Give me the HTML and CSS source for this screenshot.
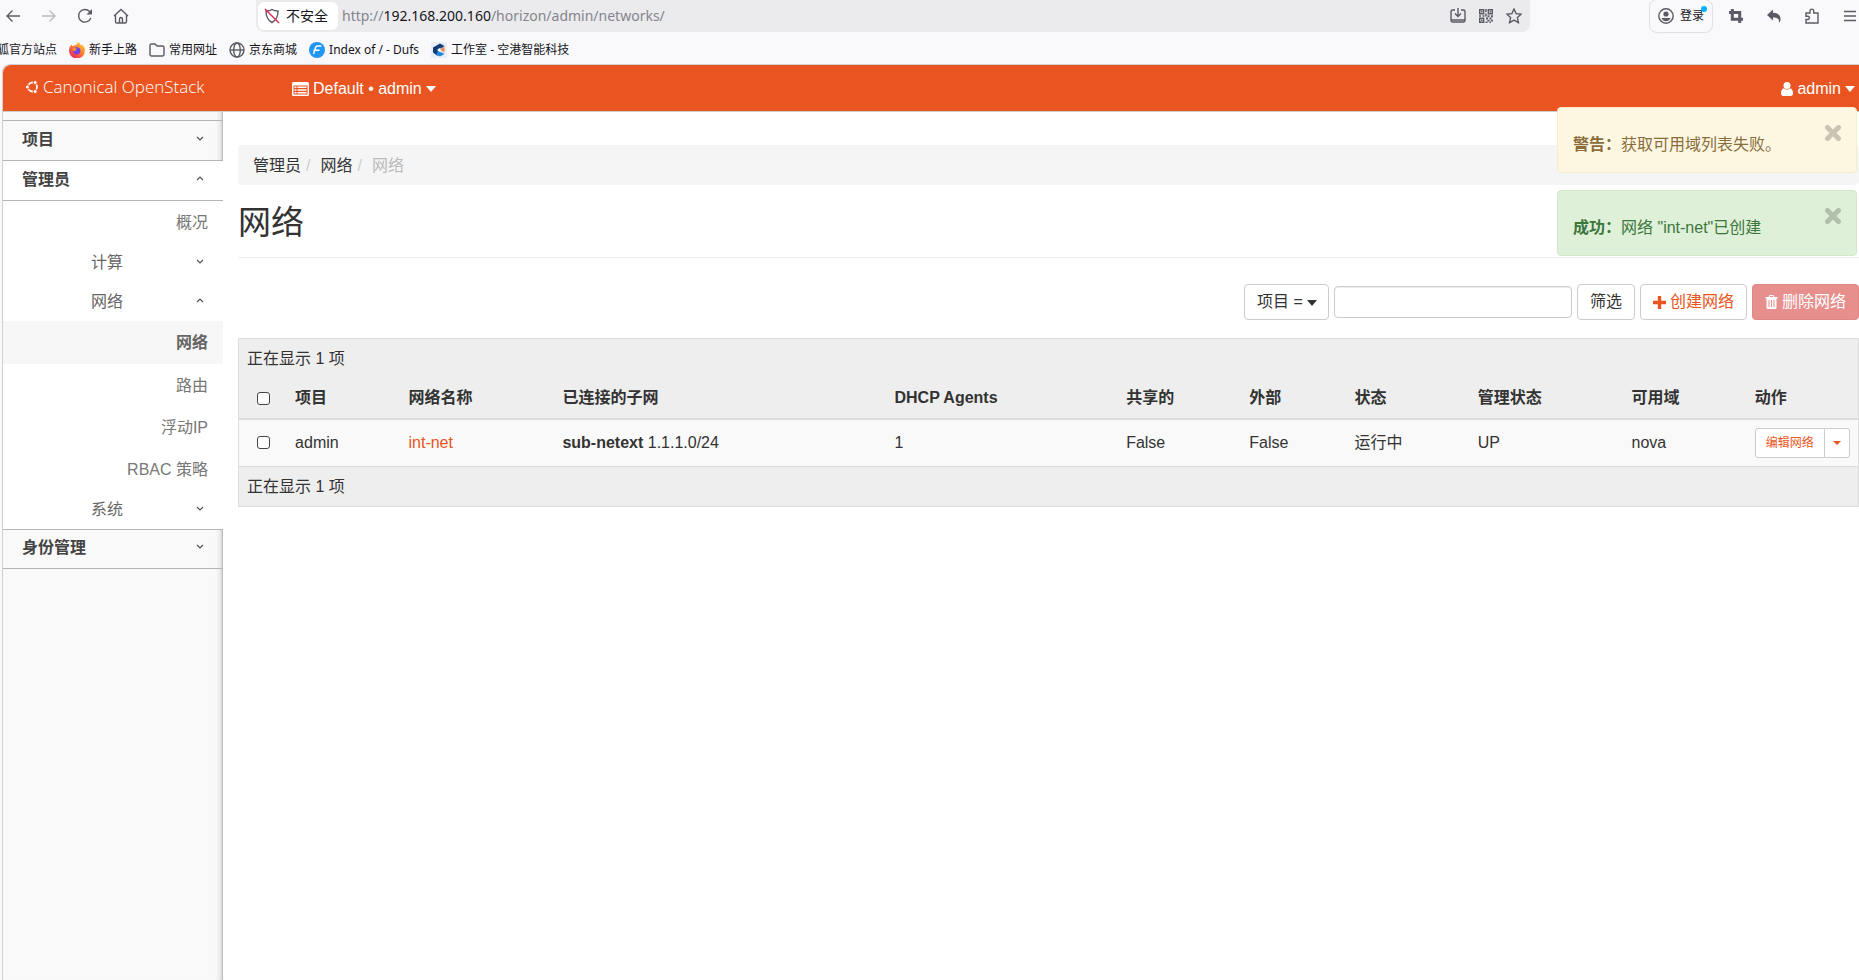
FILE: index.html
```html
<!DOCTYPE html>
<html lang="zh-CN">
<head>
    <meta charset="UTF-8">
    <meta name="viewport" content="width=device-width, initial-scale=1.0">
    <title>网络 - Canonical OpenStack</title>
    <link rel="stylesheet" href="styles.css">
</head>
<body>
    <div class="browser">
        <div class="toolbar">
            <div class="nav-buttons">
                <button type="button" class="icon-btn" aria-label="后退"><svg width="16" height="16" viewBox="0 0 16 16"><path d="M15 8H2M7.500 2.500L2 8l5.500 5.500" /></svg></button>
                <button type="button" class="icon-btn disabled" aria-label="前进"><svg width="16" height="16" viewBox="0 0 16 16"><path d="M1 8h13M8.500 2.500L14 8l-5.500 5.500" /></svg></button>
                <button type="button" class="icon-btn" aria-label="刷新"><svg width="16" height="16" viewBox="0 0 16 16"><path d="M13.800 10A6.300 6.300 0 1 1 12.500 3.500L14 5" /><path class="fill" d="M15 1v5.500H9.500z" /></svg></button>
                <button type="button" class="icon-btn" aria-label="主页"><svg width="16" height="16" viewBox="0 0 16 16"><path d="M1 8l7-6.500L15 8M2.500 7v6.500a1.500 1.500 0 0 0 1.500 1.500h8a1.500 1.500 0 0 0 1.500-1.500V7M6.500 15v-4a1.500 1.500 0 0 1 3 0v4" /></svg></button>
            </div>
            <div class="urlbar">
                <button type="button" class="security"><svg width="16" height="16" viewBox="0 0 16 16"><path d="M8 1.500c2 1.300 4 1.500 6 1.500 0 5-1 9-6 11.500C3 12 2 8 2 3c2 0 4-.2 6-1.500z" /><path class="slash" d="M1 1l14 14" /></svg>不安全</button>
                <div class="url">http://<b>192.168.200.160</b>/horizon/admin/networks/</div>
                <div class="url-actions">
                    <svg width="16" height="16" viewBox="0 0 16 16"><path d="M5 2H2.500A1.500 1.500 0 0 0 1 3.500v9A1.500 1.500 0 0 0 2.500 14h11a1.500 1.500 0 0 0 1.500-1.500v-9A1.500 1.500 0 0 0 13.500 2H11M8 0v8M5 5.500l3 3 3-3M1 12h14" /></svg>
                    <svg width="16" height="16" viewBox="0 0 16 16"><path d="M1.700 1.700h4v4h-4zM10.300 1.700h4v4h-4zM1.700 10.300h4v4h-4z" /><path class="fill" d="M3 3h1.500v1.500H3zM11.600 3h1.500v1.500h-1.500zM3 11.600h1.500v1.500H3zM7.200 1h1.500v3H7.200zM7.200 5.500h1.500v3H7.200zM1 7.200h2v1.500H1zM4.500 7.200h2v1.500h-2zM9.500 7.200h2v2h-2zM13 7.200h2v2h-2zM8 9.500h2v2H8zM11.500 9.500h2v2h-2zM9.500 11.800h2v1.700h-2zM13 11.800h2v1.700h-2zM7.500 13.500h2V15h-2zM11.500 13.500h1.500V15h-1.500z" /></svg>
                    <svg width="16" height="16" viewBox="0 0 16 16"><path d="M8 1l2.100 4.600 5 .6-3.700 3.400 1 5L8 12.100 3.600 14.600l1-5L.9 6.200l5-.6z" /></svg>
                </div>
            </div>
            <div class="tools">
                <button type="button" class="login"><svg width="16" height="16" viewBox="0 0 16 16"><circle cx="8" cy="8" r="7.200" /><circle class="fill" cx="8" cy="6" r="2.600" /><path class="fill" d="M3.500 10h9c-1 2.500-2.500 3.200-4.500 3.200S4.500 12.500 3.500 10z" /></svg>登录<span class="dot"></span></button>
                <button type="button" class="icon-btn" aria-label="截图"><svg width="16" height="16" viewBox="0 0 16 16"><path class="thick" d="M4.300 1v10.200H15M1 4.500h10.700V15" /></svg></button>
                <button type="button" class="icon-btn" aria-label="撤销"><svg width="16" height="16" viewBox="0 0 16 16"><path class="fill" d="M7 1.500v3.300c5 0 7.500 2.700 7.500 6.200 0 1.600-.6 2.900-1.500 4 .5-4-1.500-5.500-6-5.500v3L1 7z" /></svg></button>
                <button type="button" class="icon-btn" aria-label="扩展"><svg width="16" height="16" viewBox="0 0 16 16"><path d="M2 5h4V3a1.800 1.800 0 0 1 3.700 0v2H14v10H2v-3.500h1.800a1.600 1.600 0 0 0 0-3.300H2z" /></svg></button>
                <button type="button" class="icon-btn" aria-label="菜单"><svg width="16" height="16" viewBox="0 0 16 16"><path d="M2 3.500h12M2 8h12M2 12.500h12" /></svg></button>
            </div>
        </div>
        <nav class="bookmarks">
            <a href="#">狐官方站点</a>
            <a href="#"><svg width="16" height="16" viewBox="0 0 16 16"><defs><linearGradient id="fox" x1="1" y1="0" x2="0.200" y2="1"><stop offset="0" stop-color="#ffe045" /><stop offset="0.450" stop-color="#ff8a2a" /><stop offset="1" stop-color="#f0205e" /></linearGradient></defs><path fill="url(#fox)" d="M9 0c2 1.500 2.500 2.500 3 3.500l1-1c2 2 3 4 3 6A8 8 0 0 1 0 8.500C0 6 1 4 2.500 2.500l.5 1.700C5 3.500 8 3.500 9 0z" /><circle cx="7.800" cy="8.800" r="3.600" fill="#7542e5" /><path fill="#ff9a2a" d="M3 7c2-1.500 4-.8 5 0-1 .2-1.500 1-1.500 2C5 9 4 8.500 3 7z" /></svg>新手上路</a>
            <a href="#"><svg width="16" height="16" viewBox="0 0 16 16"><path d="M1 3.500A1.500 1.500 0 0 1 2.500 2H6l2 2h5.500A1.500 1.500 0 0 1 15 5.500v7a1.500 1.500 0 0 1-1.500 1.500h-11A1.500 1.500 0 0 1 1 12.500z" /></svg>常用网址</a>
            <a href="#"><svg width="16" height="16" viewBox="0 0 16 16"><circle cx="8" cy="8" r="7" /><ellipse cx="8" cy="8" rx="3.300" ry="7" /><path d="M1 8h14" /></svg>京东商城</a>
            <a href="#"><svg width="16" height="16" viewBox="0 0 16 16"><circle cx="8" cy="8" r="8" fill="#2196f3" stroke="none" /><path class="white" d="M12.500 4H8.500C6.500 4 6.500 5.500 6 7.500L4.500 12M4.500 8.200h6" /></svg>Index of / - Dufs</a>
            <a href="#"><svg width="16" height="16" viewBox="0 0 16 16"><path fill="#e8effa" d="M0 0h16v16H0z" /><path fill="#123c78" d="M9 1.500L13.500 4 8 8l-1.500 6L2 10.500v-5z" /><path fill="#2485dc" d="M7 8.500l6.500 3.500L9 14.500l-4-2z" /><path fill="#f08a3c" d="M13.500 4.500v6L9 7.800z" /><path fill="#fff" d="M9.500 5.500v5L6 8z" /></svg>工作室 - 空港智能科技</a>
        </nav>
    </div>

    <div class="page">
        <header class="topbar">
            <a href="#" class="brand">
                <svg width="14" height="14" viewBox="0 0 14 14"><circle cx="7.500" cy="7" r="4.500" fill="none" stroke="#fff" stroke-width="1.800" /><g stroke="#e95420" stroke-width="1"><circle cx="2.400" cy="7" r="2" /><circle cx="10.200" cy="2.500" r="2" /><circle cx="10.200" cy="11.500" r="2" /></g></svg>
                Canonical OpenStack
            </a>
            <a href="#" class="context">
                <svg width="17" height="14" viewBox="0 0 17 14"><path d="M1.500 0h14A1.500 1.500 0 0 1 17 1.500v11a1.500 1.500 0 0 1-1.500 1.500h-14A1.500 1.500 0 0 1 0 12.500v-11A1.500 1.500 0 0 1 1.500 0z" /><path fill="#e95420" d="M1.500 3.500h14v9h-14z" /><path d="M2.500 4.500h2V6h-2zM2.500 7.200h2v1.500h-2zM2.500 10h2v1.500h-2zM5.500 4.500h9V6h-9zM5.500 7.200h9v1.500h-9zM5.500 10h9v1.500h-9z" /></svg>
                <span>Default • admin</span>
                <span class="caret"></span>
            </a>
            <a href="#" class="user">
                <svg width="12" height="14" viewBox="0 0 12 14"><circle cx="6" cy="3.600" r="3.500" /><path d="M2.700 6.200C4.500 8 7.500 8 9.300 6.200 11.300 6.800 12 9 12 11.500c0 1.500-.8 2.500-2.200 2.500H2.200C.8 14 0 13 0 11.500 0 9 .7 6.800 2.700 6.200z" /></svg>
                <span>admin</span>
                <span class="caret"></span>
            </a>
        </header>

        <div class="layout">
            <nav class="sidebar">
                <a href="#" class="section">项目<svg width="8" height="6" viewBox="0 0 8 6"><path d="M1 1l3 3 3-3" /></svg></a>
                <div class="open">
                    <a href="#" class="section">管理员<svg width="8" height="6" viewBox="0 0 8 6"><path d="M1 4l3-3 3 3" /></svg></a>
                    <a href="#" class="item">概况</a>
                    <a href="#" class="group">计算<svg width="8" height="6" viewBox="0 0 8 6"><path d="M1 1l3 3 3-3" /></svg></a>
                    <a href="#" class="group">网络<svg width="8" height="6" viewBox="0 0 8 6"><path d="M1 4l3-3 3 3" /></svg></a>
                    <a href="#" class="item active">网络</a>
                    <a href="#" class="item">路由</a>
                    <a href="#" class="item">浮动IP</a>
                    <a href="#" class="item">RBAC 策略</a>
                    <a href="#" class="group">系统<svg width="8" height="6" viewBox="0 0 8 6"><path d="M1 1l3 3 3-3" /></svg></a>
                </div>
                <a href="#" class="section last">身份管理<svg width="8" height="6" viewBox="0 0 8 6"><path d="M1 1l3 3 3-3" /></svg></a>
            </nav>

            <main class="content">
                <ol class="breadcrumb">
                    <li><a href="#">管理员</a></li>
                    <li><a href="#">网络</a></li>
                    <li class="current">网络</li>
                </ol>
                <h1>网络</h1>

                <form class="actions">
                    <div class="select">
                        <select aria-label="筛选条件">
                            <option>项目 =</option>
                        </select>
                        <span class="caret"></span>
                    </div>
                    <input type="text" class="search" aria-label="筛选">
                    <button type="button" class="btn">筛选</button>
                    <button type="button" class="btn create"><svg width="13" height="13" viewBox="0 0 13 13"><path d="M4.800 0h3.400v4.800H13v3.400H8.200V13H4.800V8.200H0V4.800h4.800z" /></svg>创建网络</button>
                    <button type="button" class="btn delete" disabled><svg width="13" height="14" viewBox="0 0 12 14"><path fill-rule="evenodd" d="M4 0h4l1 2h3v1.500h-1V12.500A1.500 1.500 0 0 1 9.500 14h-7A1.500 1.500 0 0 1 1 12.500V3.500H0V2h3zM4.500 1L4 2h4l-.5-1zM3 5v7h1V5zM5.500 5v7h1V5zM8 5v7h1V5z" /></svg>删除网络</button>
                </form>

                <table class="networks">
                    <colgroup>
                        <col class="col-check">
                        <col class="col-project">
                        <col class="col-name">
                        <col class="col-subnets">
                        <col class="col-agents">
                        <col class="col-flag">
                        <col class="col-external">
                        <col class="col-flag">
                        <col class="col-name">
                        <col class="col-flag">
                        <col>
                    </colgroup>
                    <thead>
                        <tr class="count">
                            <td colspan="11">正在显示 1 项</td>
                        </tr>
                        <tr>
                            <th class="check"><input type="checkbox" aria-label="全选"></th>
                            <th>项目</th>
                            <th>网络名称</th>
                            <th>已连接的子网</th>
                            <th>DHCP Agents</th>
                            <th>共享的</th>
                            <th>外部</th>
                            <th>状态</th>
                            <th>管理状态</th>
                            <th>可用域</th>
                            <th>动作</th>
                        </tr>
                    </thead>
                    <tbody>
                        <tr>
                            <td class="check"><input type="checkbox" aria-label="选择 int-net"></td>
                            <td>admin</td>
                            <td><a href="#">int-net</a></td>
                            <td><b>sub-netext</b> 1.1.1.0/24</td>
                            <td>1</td>
                            <td>False</td>
                            <td>False</td>
                            <td>运行中</td>
                            <td>UP</td>
                            <td>nova</td>
                            <td>
                                <div class="btn-group">
                                    <button type="button">编辑网络</button>
                                    <button type="button" class="toggle" aria-label="更多"><span class="caret"></span></button>
                                </div>
                            </td>
                        </tr>
                    </tbody>
                    <tfoot>
                        <tr class="count">
                            <td colspan="11">正在显示 1 项</td>
                        </tr>
                    </tfoot>
                </table>
            </main>
        </div>

        <div class="messages">
            <div class="alert warning">
                <button type="button" class="close" aria-label="关闭"><svg width="16" height="16" viewBox="0 0 16 16"><path d="M2.500 2.500l11 11M13.500 2.500l-11 11" /></svg></button>
                <strong>警告：</strong>获取可用域列表失败。
            </div>
            <div class="alert success">
                <button type="button" class="close" aria-label="关闭"><svg width="16" height="16" viewBox="0 0 16 16"><path d="M2.500 2.500l11 11M13.500 2.500l-11 11" /></svg></button>
                <strong>成功：</strong>网络 "int-net"已创建
            </div>
        </div>
    </div>
</body>
</html>
```

FILE: styles.css
```css
* {
    box-sizing: border-box;
}
body {
    margin: 0;
    min-height: 100vh;
    display: flex;
    flex-direction: column;
    font-family: "Liberation Sans", "Noto Sans CJK SC", sans-serif;
    font-size: 16px;
    line-height: 22px;
    color: #333;
    background-color: #f9f9fb;
}
a {
    color: #e95420;
    text-decoration: none;
}
button,
input,
select {
    font-family: inherit;
    font-size: 16px;
    line-height: 22px;
    margin: 0;
}
button {
    cursor: pointer;
}
svg {
    display: block;
    flex: none;
}

/* Browser chrome */
.browser {
    height: 64px;
    overflow: hidden;
    color: #15141a;
    font-size: 12px;
}
.browser svg {
    fill: none;
    stroke: #5b5b66;
    stroke-width: 1.4;
}
.browser .fill {
    fill: #5b5b66;
    stroke: none;
}
.browser .thick {
    stroke-width: 3;
}
.browser .slash {
    stroke: #e22850;
}
.browser .white {
    stroke: #fff;
}
.browser svg [fill] {
    stroke: none;
}
.toolbar {
    display: flex;
    align-items: center;
    height: 32px;
}
.nav-buttons {
    display: flex;
    gap: 20px;
    width: 256px;
    padding-left: 5px;
}
.icon-btn {
    padding: 0;
    border: none;
    background: none;
}
.disabled {
    opacity: 0.4;
}
.urlbar {
    display: flex;
    flex: 1;
    align-items: center;
    height: 32px;
    padding: 2px 8px 2px 2px;
    background-color: #ebebed;
    border-radius: 0 0 8px 8px;
}
.security {
    display: flex;
    align-items: center;
    gap: 6px;
    height: 28px;
    padding: 0 10px 0 6px;
    border: none;
    border-radius: 6px;
    background-color: #fff;
    color: #15141a;
    font-size: 14px;
    white-space: nowrap;
}
.url {
    flex: 1;
    padding-left: 4px;
    font-family: "Noto Sans", sans-serif;
    font-size: 14px;
    color: #85858c;
}
.url b {
    font-weight: normal;
    color: #15141a;
}
.url-actions {
    display: flex;
    gap: 12px;
}
.tools {
    display: flex;
    align-items: center;
    gap: 22px;
    width: 329px;
    padding-left: 119px;
}
.login {
    position: relative;
    display: flex;
    flex: none;
    align-items: center;
    gap: 6px;
    height: 34px;
    padding: 0 8px;
    margin-right: -7px;
    border: 1px solid #e0e0e6;
    border-radius: 8px;
    background: none;
    color: #15141a;
    font-size: 12px;
    white-space: nowrap;
}
.dot {
    position: absolute;
    top: 6px;
    right: 5px;
    width: 6px;
    height: 6px;
    border-radius: 50%;
    background-color: #00b3f4;
}
.bookmarks {
    display: flex;
    align-items: center;
    gap: 12px;
    height: 36px;
    margin-left: -3px;
}
.bookmarks a {
    display: flex;
    align-items: center;
    gap: 4px;
    color: #15141a;
    font-family: "Noto Sans", "Noto Sans CJK SC", sans-serif;
    white-space: nowrap;
}

/* Top bar */
.page {
    position: relative;
    display: flex;
    flex: 1;
    flex-direction: column;
    margin-left: 2px;
    border: solid #d0d0d4;
    border-width: 1px 0 0 1px;
    border-radius: 8px 0 0 0;
    background-color: #fff;
}
.topbar {
    display: flex;
    align-items: center;
    height: 47px;
    padding: 1px 4px 0 0;
    background-color: #e95420;
    border-bottom: 1px solid #ccc;
    border-radius: 8px 0 0 0;
}
.topbar a {
    display: flex;
    align-items: center;
    gap: 4px;
    color: #fff;
}
.topbar svg {
    fill: #fff;
}
.topbar .brand {
    width: 289px;
    padding-left: 22px;
    padding-bottom: 4px;
    font-family: "Open Sans", sans-serif;
    font-size: 17px;
    font-weight: 300;
}
.topbar .user {
    margin-left: auto;
}
.caret {
    flex: none;
    border: solid transparent;
    border-width: 6px 5px 0;
    border-top-color: currentColor;
}

/* Sidebar */
.layout {
    display: flex;
    flex: 1;
}
.sidebar {
    width: 220px;
    padding-top: 8px;
    background-color: #f9f9f9;
    border-right: 1px solid #bbb;
    box-shadow: inset -6px 0 6px -6px #bbb;
}
.sidebar a {
    display: flex;
    align-items: center;
    justify-content: space-between;
    color: #666;
}
.sidebar svg {
    margin-bottom: 2px;
    fill: none;
    stroke: #555;
    stroke-width: 1.2;
}
.sidebar .section {
    height: 40px;
    padding: 0 18px 2px 19px;
    border-top: 1px solid #b5b5b5;
    font-weight: bold;
    color: #444;
}
.sidebar .last {
    border-bottom: 1px solid #b5b5b5;
}
.open {
    margin-right: -1px;
    background-color: #fff;
}
.sidebar .open .section {
    height: 41px;
    padding-right: 19px;
    border-bottom: 1px solid #b5b5b5;
}
.sidebar .item {
    justify-content: flex-end;
    height: 42px;
    padding: 1px 15px 0 0;
    color: #777;
}
.sidebar .active {
    height: 43px;
    background-color: #f7f7f7;
    font-weight: bold;
    color: #666;
}
.sidebar .group {
    height: 39px;
    padding: 1px 19px 0 88px;
}

/* Content */
.content {
    flex: 1;
    min-width: 0;
    padding: 33px 0 0 15px;
}
.breadcrumb {
    display: flex;
    margin: 0;
    padding: 10px 15px 8px;
    list-style: none;
    background-color: #f5f5f5;
    border-radius: 4px;
}
.breadcrumb a {
    color: #333;
}
.breadcrumb li + li::before {
    content: "/";
    padding: 0 10px 0 5px;
    color: #ccc;
}
.breadcrumb .current {
    color: #bbb;
}
h1 {
    margin: 0 0 26px;
    padding: 19px 0 16px;
    border-bottom: 1px solid #eee;
    font-size: 33px;
    line-height: 37px;
    font-weight: normal;
}
.actions {
    display: flex;
    justify-content: flex-end;
    align-items: center;
    gap: 5px;
    margin-bottom: 18px;
}
.btn,
.select select {
    height: 36px;
    padding: 0 12px;
    border: 1px solid #ccc;
    border-radius: 4px;
    background-color: #fff;
    color: #333;
}
.btn {
    display: flex;
    align-items: center;
    gap: 4px;
}
.btn svg {
    fill: currentColor;
}
.select {
    position: relative;
}
.select select {
    appearance: none;
    width: 85px;
}
.select .caret {
    position: absolute;
    top: 16px;
    right: 12px;
    pointer-events: none;
}
.search {
    width: 238px;
    height: 32px;
    padding: 0 12px;
    border: 1px solid #ccc;
    border-radius: 4px;
    box-shadow: inset 0 1px 1px rgba(0, 0, 0, 0.075);
}
.create {
    color: #e95420;
}
.delete {
    border-color: #e28482;
    background-color: #e78f8d;
    color: #fff;
}

/* Table */
.networks {
    width: 100%;
    table-layout: fixed;
    border: 1px solid #ddd;
    border-collapse: collapse;
}
.networks th,
.networks td {
    height: 40px;
    padding: 0 8px;
    text-align: left;
}
.networks thead,
.networks tfoot {
    background-color: #eee;
}
.networks thead {
    border-bottom: 2px solid #ddd;
}
.networks tfoot {
    border-top: 1px solid #ddd;
}
.networks tbody {
    background-color: #f9f9f9;
}
.networks tbody td {
    height: 48px;
}
.networks .check {
    padding: 0 0 0 18px;
}
.networks input {
    display: block;
    appearance: none;
    width: 13px;
    height: 13px;
    border: 1px solid #444;
    border-radius: 3px;
    background-color: #fff;
}
.col-check {
    width: 3%;
}
.col-project {
    width: 7%;
}
.col-name {
    width: 9.5%;
}
.col-subnets {
    width: 20.5%;
}
.col-agents {
    width: 14.3%;
}
.col-flag {
    width: 7.6%;
}
.col-external {
    width: 6.5%;
}
.btn-group {
    display: flex;
}
.btn-group button {
    height: 30px;
    padding: 0 10px;
    border: 1px solid #ccc;
    border-radius: 3px 0 0 3px;
    background-color: #fff;
    color: #e95420;
    font-size: 12px;
    white-space: nowrap;
}
.btn-group .toggle {
    display: flex;
    align-items: center;
    padding: 0 8px;
    margin-left: -1px;
    border-radius: 0 3px 3px 0;
}
.btn-group .caret {
    border-width: 4px 4px 0;
}

/* Messages */
.messages {
    position: absolute;
    top: 42px;
    right: 2px;
    width: 300px;
}
.alert {
    position: relative;
    margin-bottom: 17px;
    padding: 26px 15px 16px;
    border: 1px solid;
    border-radius: 4px;
}
.warning {
    background-color: #fdf7e2;
    border-color: #faebcc;
    color: #8a6d3b;
}
.success {
    background-color: #dff0d8;
    border-color: #d0e9c6;
    color: #3c763d;
}
.close {
    position: absolute;
    top: 17px;
    right: 15px;
    padding: 0;
    border: none;
    background: none;
    opacity: 0.2;
}
.close svg {
    fill: none;
    stroke: #333;
    stroke-width: 5;
    stroke-linecap: round;
}
.alert .close svg {
    stroke: currentColor;
}
```
